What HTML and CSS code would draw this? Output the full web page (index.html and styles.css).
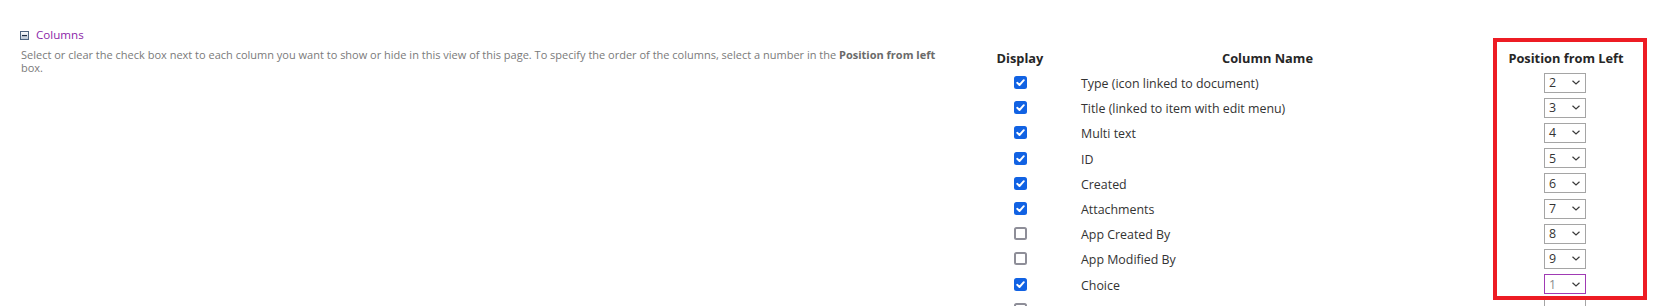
FILE: index.html
```html
<!DOCTYPE html>
<html lang="en">
<head>
<meta charset="utf-8">
<title>Columns</title>
<link rel="stylesheet" href="styles.css">
</head>
<body>
<div class="page">
  <section class="intro">
    <div class="section-title">
      <svg class="collapse-icon" width="9" height="9" viewBox="0 0 9 9">
        <defs>
          <linearGradient id="g" x1="0" y1="0" x2="0" y2="1">
            <stop offset="0" stop-color="#ffffff"/>
            <stop offset="1" stop-color="#b9c6d6"/>
          </linearGradient>
        </defs>
        <rect x="0.5" y="0.5" width="8" height="8" fill="url(#g)" stroke="#4e6580"/>
        <rect x="2" y="4" width="5" height="1.2" fill="#1d2d44"/>
      </svg>
      <span class="title-link">Columns</span>
    </div>
    <p class="desc">Select or clear the check box next to each column you want to show or hide in this view of this page. To specify the order of the columns, select a number in the <b>Position from left</b> box.</p>
  </section>

  <div class="columns-table">
    <div class="th th-display">Display</div>
    <div class="th th-name">Column Name</div>
    <div class="th th-pos">Position from Left</div>

    <div class="cell cell-check"><span class="cb checked"><svg viewBox="0 0 13 13"><path d="M3.2 6.8 L5.5 9 L9.8 4.2" /></svg></span></div>
    <div class="cell cell-name">Type (icon linked to document)</div>
    <div class="cell cell-pos"><span class="sel">2<svg viewBox="0 0 8 5"><path d="M0.5 0.8 L4 4 L7.5 0.8"/></svg></span></div>

    <div class="cell cell-check"><span class="cb checked"><svg viewBox="0 0 13 13"><path d="M3.2 6.8 L5.5 9 L9.8 4.2" /></svg></span></div>
    <div class="cell cell-name">Title (linked to item with edit menu)</div>
    <div class="cell cell-pos"><span class="sel">3<svg viewBox="0 0 8 5"><path d="M0.5 0.8 L4 4 L7.5 0.8"/></svg></span></div>

    <div class="cell cell-check"><span class="cb checked"><svg viewBox="0 0 13 13"><path d="M3.2 6.8 L5.5 9 L9.8 4.2" /></svg></span></div>
    <div class="cell cell-name">Multi text</div>
    <div class="cell cell-pos"><span class="sel">4<svg viewBox="0 0 8 5"><path d="M0.5 0.8 L4 4 L7.5 0.8"/></svg></span></div>

    <div class="cell cell-check"><span class="cb checked"><svg viewBox="0 0 13 13"><path d="M3.2 6.8 L5.5 9 L9.8 4.2" /></svg></span></div>
    <div class="cell cell-name">ID</div>
    <div class="cell cell-pos"><span class="sel">5<svg viewBox="0 0 8 5"><path d="M0.5 0.8 L4 4 L7.5 0.8"/></svg></span></div>

    <div class="cell cell-check"><span class="cb checked"><svg viewBox="0 0 13 13"><path d="M3.2 6.8 L5.5 9 L9.8 4.2" /></svg></span></div>
    <div class="cell cell-name">Created</div>
    <div class="cell cell-pos"><span class="sel">6<svg viewBox="0 0 8 5"><path d="M0.5 0.8 L4 4 L7.5 0.8"/></svg></span></div>

    <div class="cell cell-check"><span class="cb checked"><svg viewBox="0 0 13 13"><path d="M3.2 6.8 L5.5 9 L9.8 4.2" /></svg></span></div>
    <div class="cell cell-name">Attachments</div>
    <div class="cell cell-pos"><span class="sel">7<svg viewBox="0 0 8 5"><path d="M0.5 0.8 L4 4 L7.5 0.8"/></svg></span></div>

    <div class="cell cell-check"><span class="cb"></span></div>
    <div class="cell cell-name">App Created By</div>
    <div class="cell cell-pos"><span class="sel">8<svg viewBox="0 0 8 5"><path d="M0.5 0.8 L4 4 L7.5 0.8"/></svg></span></div>

    <div class="cell cell-check"><span class="cb"></span></div>
    <div class="cell cell-name">App Modified By</div>
    <div class="cell cell-pos"><span class="sel">9<svg viewBox="0 0 8 5"><path d="M0.5 0.8 L4 4 L7.5 0.8"/></svg></span></div>

    <div class="cell cell-check"><span class="cb checked"><svg viewBox="0 0 13 13"><path d="M3.2 6.8 L5.5 9 L9.8 4.2" /></svg></span></div>
    <div class="cell cell-name">Choice</div>
    <div class="cell cell-pos"><span class="sel changed">1<svg viewBox="0 0 8 5"><path d="M0.5 0.8 L4 4 L7.5 0.8"/></svg></span></div>

    <div class="cell cell-check"><span class="cb"></span></div>
    <div class="cell cell-name"></div>
    <div class="cell cell-pos"><span class="sel"></span></div>

    <div class="highlight"></div>
  </div>
</div>
</body>
</html>
```

FILE: styles.css
```css
html, body {
  margin: 0;
  padding: 0;
  background: #ffffff;
}

body {
  font-family: "Open Sans", "Noto Sans", "Liberation Sans", sans-serif;
  color: #333333;
}

.page {
  display: flex;
  align-items: flex-start;
}

/* Left intro */
.intro {
  width: 925px;
  padding: 27px 0 0 20px;
  flex: none;
}

.section-title {
  display: flex;
  align-items: center;
  gap: 7px;
  height: 16px;
}

.collapse-icon {
  display: block;
  flex: none;
}

.title-link {
  font-size: 11.6px;
  line-height: 16px;
  color: #8c1fa8;
}

.desc {
  margin: 6px 0 0 1px;
  font-size: 11px;
  line-height: 12.5px;
  color: #7a7a7a;
}

.desc b {
  color: #6a6a6a;
  font-weight: 700;
}

/* Right table */
.columns-table {
  position: relative;
  margin-left: 45px;
  padding-top: 47px;
  display: grid;
  grid-template-columns: 60px 435px 162px;
  grid-template-rows: 23px;
  grid-auto-rows: 25.2px;
  flex: none;
}

.th {
  font-weight: 700;
  font-size: 12.8px;
  line-height: 23px;
  color: #262626;
  text-align: center;
  white-space: nowrap;
}

.th-name {
  padding: 0 31px;
}

.cell {
  display: flex;
  align-items: center;
  font-size: 12.4px;
  color: #333333;
  white-space: nowrap;
}

.cell-check {
  justify-content: center;
}

.cell-name {
  padding: 2px 31px 0;
}

.cell-pos {
  justify-content: center;
}

/* Checkbox */
.cb {
  box-sizing: border-box;
  width: 13px;
  height: 13px;
  border: 2px solid #8e8e98;
  border-radius: 2.5px;
  background: #ffffff;
  display: block;
}

.cb.checked {
  border: none;
  background: #1162e3;
}

.cb svg {
  display: block;
  width: 13px;
  height: 13px;
  fill: none;
  stroke: #ffffff;
  stroke-width: 1.9;
  stroke-linecap: round;
  stroke-linejoin: round;
}

/* Select */
.sel {
  box-sizing: border-box;
  width: 42px;
  height: 20px;
  border: 1px solid #a5a5a5;
  background: #ffffff;
  display: flex;
  align-items: center;
  justify-content: space-between;
  padding: 0 5px 0 4px;
  font-size: 12.4px;
  color: #333333;
  transform: translateX(-1px);
}

.sel svg {
  width: 8px;
  height: 5px;
  fill: none;
  stroke: #3a3a3a;
  stroke-width: 1.2;
}

.sel.changed {
  border-color: #a03ab4;
  color: #8a8a8a;
}

/* Red annotation box drawn over the position column */
.highlight {
  position: absolute;
  left: 503px;
  top: 38px;
  width: 154px;
  height: 262px;
  box-sizing: border-box;
  border: 4px solid #ed1c24;
  pointer-events: none;
}
```
